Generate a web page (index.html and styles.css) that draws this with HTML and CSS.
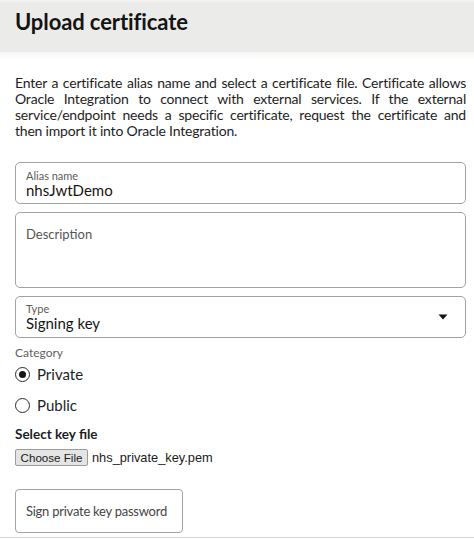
FILE: index.html
```html
<!DOCTYPE html>
<html lang="en">
<head>
<meta charset="utf-8">
<title>Upload certificate</title>
<link rel="stylesheet" href="styles.css">
</head>
<body>
<div class="dialog">
  <header class="head">
    <h1 class="title">Upload certificate</h1>
  </header>
  <div class="content">
    <p class="intro">Enter a certificate alias name and select a certificate file. Certificate allows Oracle Integration to connect with external services. If the external service/endpoint needs a specific certificate, request the certificate and then import it into Oracle Integration.</p>

    <div class="field">
      <div class="field-label">Alias name</div>
      <div class="field-value">nhsJwtDemo</div>
    </div>

    <div class="field area">
      <div class="placeholder">Description</div>
    </div>

    <div class="field select">
      <div class="select-text">
        <div class="field-label">Type</div>
        <div class="field-value">Signing key</div>
      </div>
      <svg class="caret" width="10" height="6" viewBox="0 0 10 6"><path d="M0.5 0.5 L9.5 0.5 L5 5.5 Z" fill="#161513"/></svg>
    </div>

    <div class="group-label">Category</div>
    <div class="radio-row">
      <span class="radio checked"></span>
      <span class="radio-text">Private</span>
    </div>
    <div class="radio-row">
      <span class="radio"></span>
      <span class="radio-text">Public</span>
    </div>

    <div class="file-label">Select key file</div>
    <div class="file-row">
      <span class="file-btn">Choose File</span>
      <span class="file-name">nhs_private_key.pem</span>
    </div>

    <div class="pw-box">Sign private key password</div>
  </div>
</div>
</body>
</html>
```

FILE: styles.css
```css
html, body {
  margin: 0;
  padding: 0;
  background: #ffffff;
}

.dialog {
  width: 474px;
  height: 538px;
  box-sizing: border-box;
  border-bottom: 1px solid #d6d6d6;
  font-family: Lato, "Noto Sans", sans-serif;
  color: #161513;
  overflow: hidden;
}

.head {
  height: 52px;
  box-sizing: border-box;
  background: #ebebea;
  border-top: 2px solid #f2f2f1;
  padding: 7px 15px 0;
}

.title {
  margin: 0;
  font-size: 22px;
  line-height: 26px;
  font-weight: 700;
  letter-spacing: -0.1px;
  color: #141414;
}

.content {
  padding: 0 8px 0 15px;
  background: linear-gradient(#f6f6f5, #ffffff 8px);
}

.intro {
  margin: 0;
  padding: 23px 0 0 0;
  font-size: 14px;
  line-height: 16px;
  letter-spacing: -0.2px;
  text-align: justify;
  color: #1e1e1e;
}

.field {
  margin-top: 23px;
  border: 1px solid #a3a3a3;
  border-radius: 5px;
  padding: 7px 10px 4px;
  height: 42px;
  box-sizing: border-box;
}

.field-label {
  font-size: 11px;
  line-height: 12px;
  color: #5b5b5b;
}

.field-value {
  font-size: 15px;
  line-height: 17px;
  color: #161513;
}

.area {
  margin-top: 8px;
  height: 76px;
  padding-top: 13px;
}

.placeholder {
  font-size: 13px;
  line-height: 16px;
  color: #555555;
}

.select {
  margin-top: 8px;
  display: flex;
  align-items: center;
  justify-content: space-between;
  padding-right: 17px;
  padding-top: 6px;
}

.select-text {
  align-self: flex-start;
}

.caret {
  display: block;
  margin-bottom: 3px;
}

.group-label {
  margin-top: 7px;
  font-size: 12px;
  line-height: 15px;
  color: #5f5f5f;
}

.radio-row {
  display: flex;
  align-items: center;
  gap: 7px;
  height: 24px;
  margin-top: 2px;
}

.radio-row + .radio-row {
  margin-top: 7px;
}

.radio {
  width: 13px;
  height: 13px;
  border: 1.5px solid #2b2b2b;
  border-radius: 50%;
  box-sizing: content-box;
  display: flex;
  align-items: center;
  justify-content: center;
}

.radio.checked::after {
  content: "";
  width: 7px;
  height: 7px;
  border-radius: 50%;
  background: #161513;
}

.radio-text {
  font-size: 15px;
  line-height: 18px;
  color: #1e1e1e;
}

.file-label {
  margin-top: 9px;
  font-size: 13.5px;
  line-height: 16px;
  font-weight: 700;
  color: #1e1e1e;
}

.file-row {
  margin-top: 7px;
  display: flex;
  align-items: center;
  gap: 4px;
  font-family: "Liberation Sans", Arial, sans-serif;
}

.file-btn {
  display: block;
  height: 17px;
  box-sizing: border-box;
  width: 73px;
  font-size: 11.6px;
  line-height: 15px;
  text-align: center;
  background: #e4e4e4;
  border: 1px solid #9c9c9c;
  border-radius: 2px;
  color: #1a1a1a;
}

.file-name {
  font-size: 12.8px;
  color: #1a1a1a;
}

.pw-box {
  margin-top: 23px;
  width: 168px;
  height: 44px;
  box-sizing: border-box;
  border: 1px solid #a3a3a3;
  border-radius: 4px;
  padding: 12px 10px 0;
  font-size: 13px;
  line-height: 18px;
  letter-spacing: -0.25px;
  white-space: nowrap;
  color: #454545;
}
```
